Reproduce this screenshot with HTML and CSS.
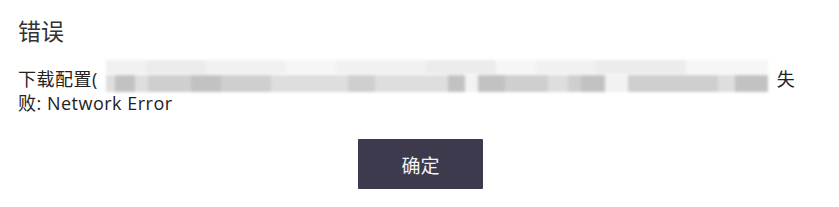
FILE: index.html
```html
<!DOCTYPE html>
<html lang="zh-CN">
<head>
<meta charset="utf-8">
<title>错误</title>
<link rel="stylesheet" href="styles.css">
</head>
<body>
<div class="dialog">
  <div class="title">错误</div>
  <div class="message">下载配置(<span class="redact" aria-hidden="true"><span class="row top"><i class="w1" style="width:40px"></i><i class="w2" style="width:60px"></i><i class="w1" style="width:80px"></i><i class="w3" style="width:50px"></i><i class="w1" style="width:90px"></i><i class="w2" style="width:70px"></i><i class="w3" style="width:40px"></i><i class="w1" style="width:60px"></i><i class="w2" style="width:90px"></i><i class="w3" style="width:82px"></i></span><span class="row bottom"><i class="l" style="width:9px"></i><i class="d" style="width:20px"></i><i class="l" style="width:13px"></i><i class="m" style="width:43px"></i><i class="d" style="width:30px"></i><i class="m" style="width:50px"></i><i class="l" style="width:27px"></i><i class="l" style="width:50px"></i><i class="m" style="width:27px"></i><i class="l" style="width:73px"></i><i class="d" style="width:17px"></i><i class="w" style="width:13px"></i><i class="d" style="width:27px"></i><i class="m" style="width:43px"></i><i class="l" style="width:20px"></i><i class="m" style="width:13px"></i><i class="d" style="width:24px"></i><i class="w" style="width:23px"></i><i class="m" style="width:50px"></i><i class="m" style="width:40px"></i><i class="l" style="width:17px"></i><i class="d" style="width:33px"></i></span></span>失<br>败: Network Error</div>
  <div class="actions">
    <button class="ok" type="button">确定</button>
  </div>
</div>
</body>
</html>
```

FILE: styles.css
```css
html, body {
  margin: 0;
  padding: 0;
  background: #ffffff;
}

body {
  font-family: "Open Sans", "Noto Sans CJK SC", sans-serif;
  color: #222222;
}

.dialog {
  width: 839px;
  height: 207px;
  box-sizing: border-box;
  padding: 15px 18px 0 18px;
}

.title {
  font-size: 23px;
  line-height: 32px;
  color: #333333;
}

.message {
  margin-top: 20px;
  font-size: 18px;
  line-height: 24px;
  letter-spacing: 0.5px;
  color: #222222;
  white-space: nowrap;
}

.redact {
  display: inline-block;
  vertical-align: top;
  width: 662px;
  height: 32px;
  margin: -7px 9px -1px 8px;
  filter: blur(1.5px);
}

.redact .row {
  display: flex;
}

.redact .top {
  height: 14px;
}

.redact .bottom {
  height: 17px;
  margin-top: 1px;
}

.redact i {
  display: block;
  height: 100%;
}

.redact .w1 { background: #f1f1f1; }
.redact .w2 { background: #ececec; }
.redact .w3 { background: #f6f6f6; }
.redact .d { background: #c2c2c2; }
.redact .m { background: #cfcfcf; }
.redact .l { background: #dedede; }
.redact .w { background: #f2f2f2; }

.actions {
  display: flex;
  justify-content: center;
  margin: 24px -18px 0 -18px;
  padding-left: 2px;
}

.ok {
  width: 125px;
  height: 50px;
  border: none;
  border-radius: 1px;
  background: #3e3a4d;
  color: #f4f4f6;
  font-family: "Noto Sans CJK SC", sans-serif;
  font-size: 19px;
  padding: 0;
  cursor: pointer;
}
```
